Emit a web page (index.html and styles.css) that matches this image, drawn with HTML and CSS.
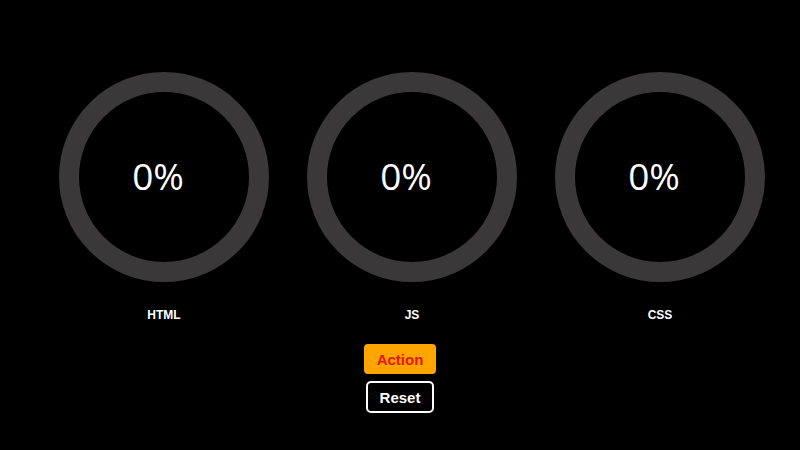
FILE: index.html
```html
<!DOCTYPE html>
<html lang="en">
    <head>
        <meta charset="utf-8">
        <title>Skills</title>
        <link rel="stylesheet" href="styles.css">
    </head>
    <body>
        <div class="skills">
            <div class="skill">
                <div class="ring"><span class="percent">0%</span></div>
                <div class="name">HTML</div>
            </div>
            <div class="skill">
                <div class="ring"><span class="percent">0%</span></div>
                <div class="name">JS</div>
            </div>
            <div class="skill">
                <div class="ring"><span class="percent">0%</span></div>
                <div class="name">CSS</div>
            </div>
        </div>

        <div class="buttons">
            <button class="btn action">Action</button>
            <button class="btn reset">Reset</button>
        </div>
    </body>
</html>
```

FILE: styles.css
```css
body
{
    margin:           0;
    background-color: #000;
    color:            #fff;
    font-family:      "Liberation Sans", Arial, sans-serif;
}

.skills
{
    display:      flex;
    padding-top:  72px;
    padding-left: 40px;
}

.skill
{
    width:          248px;
    display:        flex;
    flex-direction: column;
    align-items:    center;
}

.ring
{
    width:           210px;
    height:          210px;
    box-sizing:      border-box;
    border:          20px solid #3a3838;
    border-radius:   50%;
    display:         flex;
    align-items:     center;
    justify-content: center;
}

.percent
{
    font-family:  "Open Sans", sans-serif;
    font-size:    37px;
    line-height:  1;
    margin-right: 12px;
    margin-top:   -3px;
}

.name
{
    margin-top:  26px;
    font-size:   12px;
    font-weight: bold;
    line-height: 14px;
}

.buttons
{
    display:        flex;
    flex-direction: column;
    align-items:    center;
    gap:            7px;
    margin-top:     22px;
}

.btn
{
    font-family:   "Liberation Sans", Arial, sans-serif;
    font-size:     15px;
    font-weight:   bold;
    border-radius: 4px;
    cursor:        pointer;
}

.action
{
    width:            72px;
    height:           30px;
    background-color: #ffa500;
    color:            #e8150c;
    border:           none;
}

.reset
{
    width:            68px;
    height:           32px;
    background-color: #000;
    color:            #fff;
    border:           2px solid #fff;
    border-radius:    5px;
}
```
